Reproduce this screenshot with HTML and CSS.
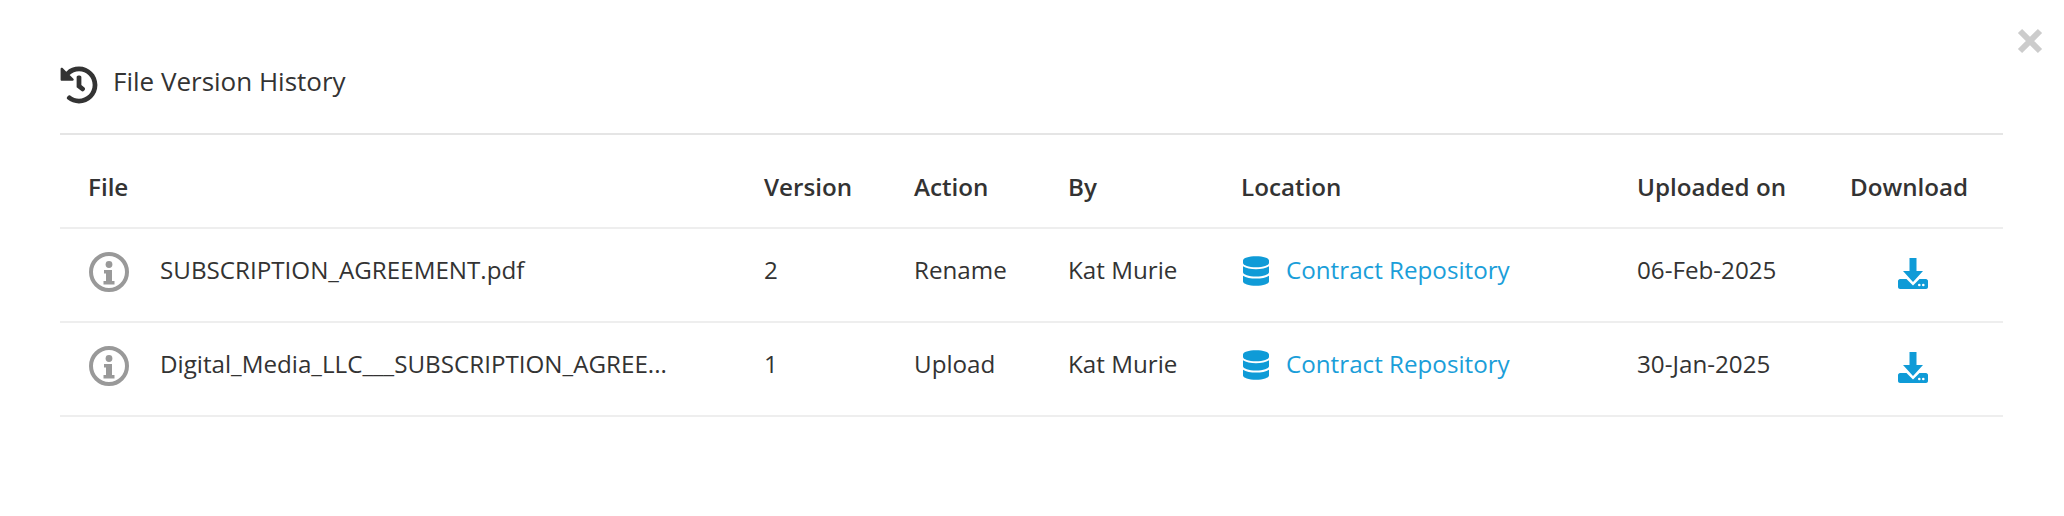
FILE: index.html
```html
<!DOCTYPE html>
<html>
<head>
<title>File Version History</title>
<link rel="stylesheet" href="styles.css">
</head>
<body>
  <div class="modal">
    <button class="close" aria-label="Close">
      <svg viewBox="0 0 26 26" width="26" height="26"><path d="M3 3 L23 23 M23 3 L3 23" /></svg>
    </button>

    <div class="modal-title">
      <svg class="history-icon" viewBox="0 0 512 512" width="38" height="38"><path d="M504 255.531c.253 136.64-111.18 248.372-247.82 248.468-59.015.042-113.223-20.53-155.822-54.911-11.077-8.94-11.905-25.541-1.839-35.607l11.267-11.267c8.609-8.609 22.353-9.551 31.891-1.984C173.062 425.135 212.781 440 256 440c101.705 0 184-82.311 184-184 0-101.705-82.311-184-184-184-48.814 0-93.149 18.969-126.068 49.932l50.754 50.754c10.08 10.08 2.941 27.314-11.313 27.314H24c-8.837 0-16-7.163-16-16V38.627c0-14.254 17.234-21.393 27.314-11.314l49.372 49.372C129.209 31.084 189.552 8 256 8c136.81 0 247.747 110.78 248 247.531zm-180.912 78.784l9.823-12.63c8.138-10.463 6.253-25.542-4.21-33.679L288 256.349V152c0-13.255-10.745-24-24-24h-16c-13.255 0-24 10.745-24 24v135.651l65.409 50.874c10.463 8.137 25.541 6.253 33.679-4.21z"/></svg>
      <span class="title-text">File Version History</span>
    </div>

    <table class="versions">
      <colgroup>
        <col class="c-file"><col class="c-version"><col class="c-action"><col class="c-by"><col class="c-location"><col class="c-date"><col class="c-download">
      </colgroup>
      <thead>
        <tr>
          <th>File</th>
          <th>Version</th>
          <th>Action</th>
          <th>By</th>
          <th>Location</th>
          <th>Uploaded on</th>
          <th class="center">Download</th>
        </tr>
      </thead>
      <tbody>
        <tr>
          <td>
            <div class="file-cell">
              <svg class="info-icon" viewBox="0 0 40 40" width="40" height="40"><circle cx="20" cy="20" r="18" /><circle class="solid" cx="20" cy="12.5" r="3.4"/><path class="solid" d="M15 18h8v11h2.5v3.5h-11V29H17v-7.5h-2z"/></svg>
              <span class="file-name">SUBSCRIPTION_AGREEMENT.pdf</span>
            </div>
          </td>
          <td>2</td>
          <td>Rename</td>
          <td>Kat Murie</td>
          <td>
            <a class="location" href="#">
              <svg viewBox="0 0 448 512" width="26" height="30"><path d="M448 73.143v45.714C448 159.143 347.667 192 224 192S0 159.143 0 118.857V73.143C0 32.857 100.333 0 224 0s224 32.857 224 73.143zM448 176v102.857C448 319.143 347.667 352 224 352S0 319.143 0 278.857V176c48.125 33.143 136.208 48.572 224 48.572S399.874 209.143 448 176zm0 160v102.857C448 479.143 347.667 512 224 512S0 479.143 0 438.857V336c48.125 33.143 136.208 48.572 224 48.572S399.874 369.143 448 336z"/></svg>
              Contract Repository
            </a>
          </td>
          <td>06-Feb-2025</td>
          <td class="center">
            <svg class="download-icon" viewBox="0 0 30 31" width="30" height="31"><path d="M11.500 0h7v13H25L15 24 5 13h6.500z"/><path d="M2 21h6.500l6.500 6.500 6.500-6.500H28c1 0 2 1 2 2v6c0 1-1 2-2 2H2c-1 0-2-1-2-2v-6c0-1 1-2 2-2z"/><circle class="dot" cx="21.300" cy="27" r="1.300"/><circle class="dot" cx="25.300" cy="27" r="1.300"/></svg>
          </td>
        </tr>
        <tr>
          <td>
            <div class="file-cell">
              <svg class="info-icon" viewBox="0 0 40 40" width="40" height="40"><circle cx="20" cy="20" r="18" /><circle class="solid" cx="20" cy="12.5" r="3.4"/><path class="solid" d="M15 18h8v11h2.5v3.5h-11V29H17v-7.5h-2z"/></svg>
              <span class="file-name">Digital_Media_LLC___SUBSCRIPTION_AGREE...</span>
            </div>
          </td>
          <td>1</td>
          <td>Upload</td>
          <td>Kat Murie</td>
          <td>
            <a class="location" href="#">
              <svg viewBox="0 0 448 512" width="26" height="30"><path d="M448 73.143v45.714C448 159.143 347.667 192 224 192S0 159.143 0 118.857V73.143C0 32.857 100.333 0 224 0s224 32.857 224 73.143zM448 176v102.857C448 319.143 347.667 352 224 352S0 319.143 0 278.857V176c48.125 33.143 136.208 48.572 224 48.572S399.874 209.143 448 176zm0 160v102.857C448 479.143 347.667 512 224 512S0 479.143 0 438.857V336c48.125 33.143 136.208 48.572 224 48.572S399.874 369.143 448 336z"/></svg>
              Contract Repository
            </a>
          </td>
          <td>30-Jan-2025</td>
          <td class="center">
            <svg class="download-icon" viewBox="0 0 30 31" width="30" height="31"><path d="M11.500 0h7v13H25L15 24 5 13h6.500z"/><path d="M2 21h6.500l6.500 6.500 6.500-6.500H28c1 0 2 1 2 2v6c0 1-1 2-2 2H2c-1 0-2-1-2-2v-6c0-1 1-2 2-2z"/><circle class="dot" cx="21.300" cy="27" r="1.300"/><circle class="dot" cx="25.300" cy="27" r="1.300"/></svg>
          </td>
        </tr>
      </tbody>
    </table>
  </div>
</body>
</html>
```

FILE: styles.css
```css
body {
    margin: 0;
    background-color: white;
    font-family: "Open Sans", sans-serif;
    color: #333;
}

.modal {
    position: relative;
    height: 516px;
    padding: 64px 61px 0 60px;
    box-sizing: border-box;
    overflow: hidden;
}

.close {
    position: absolute;
    top: 28px;
    right: 21px;
    padding: 0;
    border: none;
    background: none;
}

.close svg {
    display: block;
    stroke: #ccc;
    stroke-width: 6;
}

.modal-title {
    display: flex;
    align-items: center;
    gap: 15px;
    height: 38px;
    padding-bottom: 31px;
    border-bottom: 2px solid #e5e5e5;
    font-size: 26px;
}

.title-text {
    margin-bottom: 4px;
}

.history-icon {
    margin-top: 3px;
    fill: #333;
}

.versions {
    width: 100%;
    border-collapse: collapse;
    table-layout: fixed;
    font-size: 24.2px;
}

.c-file { width: 704px; }
.c-version { width: 150px; }
.c-action { width: 154px; }
.c-by { width: 173px; }
.c-location { width: 396px; }
.c-date { width: 213px; }

.versions th {
    height: 93px;
    padding: 10px 0 0 0;
    box-sizing: border-box;
    text-align: left;
    font-weight: 600;
    border-bottom: 2px solid #eee;
}

.versions td {
    height: 94px;
    padding: 0 0 11px 0;
    box-sizing: border-box;
    border-bottom: 2px solid #eee;
}

.versions th:first-child {
    padding-left: 28px;
}

.versions td:first-child {
    padding-left: 29px;
}

.versions .center {
    padding-right: 35px;
    text-align: center;
}

.file-cell {
    display: flex;
    align-items: center;
    gap: 31px;
}

.file-name {
    white-space: nowrap;
}

.info-icon {
    flex-shrink: 0;
    margin-top: 5px;
}

.info-icon circle {
    fill: none;
    stroke: #999;
    stroke-width: 4;
}

.info-icon .solid {
    fill: #999;
    stroke: none;
}

.location {
    display: flex;
    align-items: center;
    gap: 17px;
    padding-left: 2px;
    color: #1a9ed9;
    text-decoration: none;
}

.location svg {
    margin-top: 2px;
    fill: #0f9bd7;
}

.download-icon {
    display: inline-block;
    margin-left: 8px;
    margin-top: 6px;
    vertical-align: middle;
    fill: #0f9bd7;
}

.download-icon .dot {
    fill: white;
}
```
